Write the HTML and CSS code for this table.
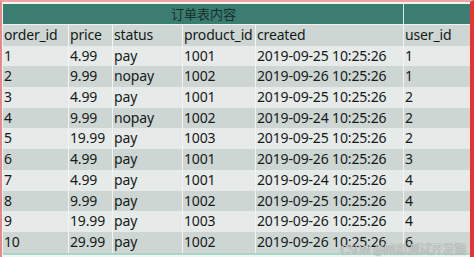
FILE: index.html
```html
<!DOCTYPE html>
<html lang="zh-CN">
<head>
<meta charset="utf-8">
<title>订单表内容</title>
<link rel="stylesheet" href="styles.css">
</head>
<body>
<div class="frame">
  <div class="sheet">
    <div class="row title-row">
      <div class="cell title">订单表内容</div>
      <div class="cell"></div>
    </div>
    <div class="row head">
      <div class="cell">order_id</div><div class="cell">price</div><div class="cell">status</div><div class="cell">product_id</div><div class="cell">created</div><div class="cell">user_id</div>
    </div>
    <div class="row odd"><div class="cell">1</div><div class="cell">4.99</div><div class="cell">pay</div><div class="cell">1001</div><div class="cell">2019-09-25 10:25:26</div><div class="cell">1</div></div>
    <div class="row even"><div class="cell">2</div><div class="cell">9.99</div><div class="cell">nopay</div><div class="cell">1002</div><div class="cell">2019-09-26 10:25:26</div><div class="cell">1</div></div>
    <div class="row odd"><div class="cell">3</div><div class="cell">4.99</div><div class="cell">pay</div><div class="cell">1001</div><div class="cell">2019-09-25 10:25:26</div><div class="cell">2</div></div>
    <div class="row even"><div class="cell">4</div><div class="cell">9.99</div><div class="cell">nopay</div><div class="cell">1002</div><div class="cell">2019-09-24 10:25:26</div><div class="cell">2</div></div>
    <div class="row odd"><div class="cell">5</div><div class="cell">19.99</div><div class="cell">pay</div><div class="cell">1003</div><div class="cell">2019-09-25 10:25:26</div><div class="cell">2</div></div>
    <div class="row even"><div class="cell">6</div><div class="cell">4.99</div><div class="cell">pay</div><div class="cell">1001</div><div class="cell">2019-09-26 10:25:26</div><div class="cell">3</div></div>
    <div class="row odd"><div class="cell">7</div><div class="cell">4.99</div><div class="cell">pay</div><div class="cell">1001</div><div class="cell">2019-09-24 10:25:26</div><div class="cell">4</div></div>
    <div class="row even"><div class="cell">8</div><div class="cell">9.99</div><div class="cell">pay</div><div class="cell">1002</div><div class="cell">2019-09-25 10:25:26</div><div class="cell">4</div></div>
    <div class="row odd"><div class="cell">9</div><div class="cell">19.99</div><div class="cell">pay</div><div class="cell">1003</div><div class="cell">2019-09-26 10:25:26</div><div class="cell">4</div></div>
    <div class="row even"><div class="cell">10</div><div class="cell">29.99</div><div class="cell">pay</div><div class="cell">1002</div><div class="cell">2019-09-26 10:25:26</div><div class="cell">6</div></div>
  </div>
  <div class="watermark">CSDN @网易测试开发猿</div>
</div>
</body>
</html>
```
FILE: styles.css
```css
html, body {
  margin: 0;
  padding: 0;
  background: #f1f5f3;
}

body {
  font-family: "Noto Sans", "Noto Sans CJK SC", sans-serif;
  font-size: 14px;
  color: #151a18;
}

.frame {
  position: relative;
  box-sizing: border-box;
  width: 474px;
  height: 257px;
  border-top: 2px solid #f0a3a3;
  border-left: 2px solid #e58a8a;
  border-right: 4px solid #e5332f;
  padding: 2px 0 0 1px;
  background: #f1f5f3;
  overflow: hidden;
}

.sheet {
  border-bottom: 2px solid #a7d6c5;
}

.row {
  display: grid;
  grid-template-columns: 66px 44px 70px 73px 148px 66px;
  height: 20.7px;
}

.cell {
  box-sizing: border-box;
  border-right: 1px solid #f1f4f3;
  padding-left: 1px;
  line-height: 19px;
  white-space: nowrap;
  overflow: hidden;
  letter-spacing: -0.15px;
}

.row .cell:last-child {
  border-right: none;
}

.title-row {
  grid-template-columns: 401px 66px;
  height: 21px;
  background: #3b7d70;
  border-bottom: 1px solid #eef3f1;
  box-sizing: border-box;
}

.title-row .cell {
  border-right-color: #d6e6e1;
}

.title {
  font-family: "Noto Sans CJK SC", sans-serif;
  font-size: 13px;
  letter-spacing: 0;
  text-align: center;
  line-height: 20px;
  color: #17302a;
}

.head,
.even {
  background: #cdd6d3;
}

.odd {
  background: #e6eae8;
}

.watermark {
  position: absolute;
  right: 4px;
  bottom: 1px;
  font-family: "Noto Sans CJK SC", sans-serif;
  font-size: 12px;
  line-height: 14px;
  color: rgba(225, 228, 227, 0.85);
  text-shadow: 0 0 1px rgba(60, 60, 60, 0.7);
  letter-spacing: -0.3px;
}
```
